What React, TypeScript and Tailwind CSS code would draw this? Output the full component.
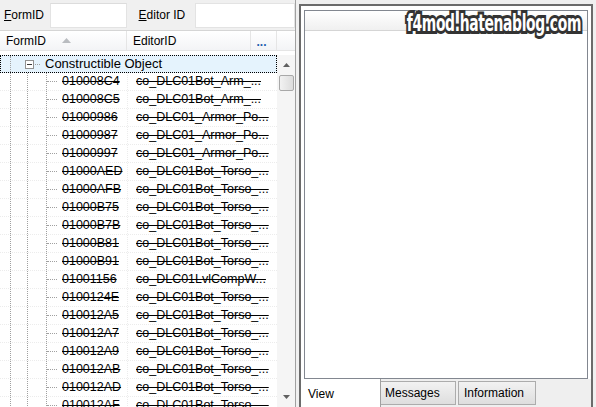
import React from "react";

type Row = {
    formId: string
    editorId: string
}

const rows: Row[] = [
    {formId: "010008C4", editorId: "co_DLC01Bot_Arm_..."},
    {formId: "010008C5", editorId: "co_DLC01Bot_Arm_..."},
    {formId: "01000986", editorId: "co_DLC01_Armor_Po..."},
    {formId: "01000987", editorId: "co_DLC01_Armor_Po..."},
    {formId: "01000997", editorId: "co_DLC01_Armor_Po..."},
    {formId: "01000AED", editorId: "co_DLC01Bot_Torso_..."},
    {formId: "01000AFB", editorId: "co_DLC01Bot_Torso_..."},
    {formId: "01000B75", editorId: "co_DLC01Bot_Torso_..."},
    {formId: "01000B7B", editorId: "co_DLC01Bot_Torso_..."},
    {formId: "01000B81", editorId: "co_DLC01Bot_Torso_..."},
    {formId: "01000B91", editorId: "co_DLC01Bot_Torso_..."},
    {formId: "01001156", editorId: "co_DLC01LvlCompW..."},
    {formId: "0100124E", editorId: "co_DLC01Bot_Torso_..."},
    {formId: "010012A5", editorId: "co_DLC01Bot_Torso_..."},
    {formId: "010012A7", editorId: "co_DLC01Bot_Torso_..."},
    {formId: "010012A9", editorId: "co_DLC01Bot_Torso_..."},
    {formId: "010012AB", editorId: "co_DLC01Bot_Torso_..."},
    {formId: "010012AD", editorId: "co_DLC01Bot_Torso_..."},
    {formId: "010012AF", editorId: "co_DLC01Bot_Torso_..."},
]

function FilterBar() {
    return (
        <div className="h-[30px] flex items-center text-[12px] text-black">
            <span className="ml-[4px] w-[46px]"><span className="underline">F</span>ormID</span>
            <div className="w-[77px] h-[25px] bg-white border border-[#e3e3e3] border-t-[#dcdcdc]"></div>
            <span className="ml-[12px] w-[57px]"><span className="underline">E</span>ditor ID</span>
            <div className="w-[100px] h-[25px] bg-white border border-[#e3e3e3]"></div>
        </div>
    )
}

function Header() {
    return (
        <div className="h-[21px] flex text-[12px] text-black bg-gradient-to-b from-white to-[#f3f4f6] border-t border-[#d5d5d5] border-b border-b-[#e5e5e5]">
            <div className="w-[127px] flex items-center pl-[6px] border-r border-[#e5e5e5]">
                FormID
                <svg width="9" height="5" viewBox="0 0 9 5" className="ml-[16px]">
                    <path d="M0 5 L4.5 0 L9 5 Z" fill="#b9bcc0"/>
                </svg>
            </div>
            <div className="w-[124px] flex items-center pl-[6px] border-r border-[#e5e5e5]">EditorID</div>
            <div className="w-[26px] flex items-end justify-center pr-[4px] pb-[2px] border-r border-[#e5e5e5] text-[#1f5fb0] font-bold leading-none">...</div>
            <div className="flex-1"></div>
        </div>
    )
}

function Indent() {
    return (
        <div className="flex h-full shrink-0">
            <div className="w-[10px] h-full"></div>
            <div className="w-[17px] h-full border-l border-dotted border-[#a0a0a0]"></div>
            <div className="w-[19px] h-full border-l border-dotted border-[#a0a0a0]"></div>
            <div className="flex flex-col w-[16px] h-full border-l border-dotted border-[#a0a0a0]">
                <div className="h-[9px] w-[10px] border-b border-dotted border-[#a0a0a0]"></div>
            </div>
        </div>
    )
}

function TreeList() {
    return (
        <div className="flex flex-1 min-h-0 pt-[4px] bg-white">
            <div className="w-[277px] flex flex-col overflow-hidden">
                <div className="h-[18px] flex items-center shrink-0 bg-[#e5f3fd] border border-dotted border-black">
                    <div className="w-[9px] h-full"></div>
                    <div className="w-[15px] h-full border-l border-dotted border-[#a0a0a0]"></div>
                    <div className="w-[9px] h-[9px] border border-[#919191] bg-white flex items-center justify-center">
                        <div className="w-[5px] h-px bg-[#3a3a3a]"></div>
                    </div>
                    <div className="w-[5px] h-px border-b border-dotted border-[#a0a0a0] ml-[1px]"></div>
                    <span className="ml-[5px] text-[13px] text-black">Constructible Object</span>
                </div>
                {rows.map(row => (
                    <div key={row.formId} className="h-[18px] flex items-center shrink-0 text-[12.5px] text-black border-b border-dotted border-[#ececec]">
                        <Indent/>
                        <div className="w-[65px] line-through decoration-black">{row.formId}</div>
                        <div className="pl-[8px] h-full flex items-center border-l border-dotted border-[#ececec] line-through decoration-black whitespace-nowrap overflow-hidden">{row.editorId}</div>
                    </div>
                ))}
            </div>
            <div className="w-[18px] bg-[#f5f5f5] flex flex-col items-center">
                <svg width="9" height="5" viewBox="0 0 9 5" className="mt-[7px]">
                    <path d="M1 5 L4.5 1 L8 5 Z" fill="#606060"/>
                </svg>
                <div className="mt-[8px] w-[15px] h-[16px] rounded-[2px] border border-[#a8a8a8] bg-gradient-to-r from-[#f2f2f2] to-[#dcdcdc]"></div>
                <div className="flex-1"></div>
                <svg width="9" height="5" viewBox="0 0 9 5" className="mb-[7px]">
                    <path d="M1 0 L4.5 4 L8 0 Z" fill="#606060"/>
                </svg>
            </div>
        </div>
    )
}

function RightPanel() {
    return (
        <div className="flex-1 flex flex-col mt-[4px] ml-[3px] mr-[3px] border-l-2 border-t-2 border-r-2 border-[#6b6b6b] bg-[#f0f0f0]">
            <div className="flex-1 flex flex-col bg-white px-[3px] pt-[4px]">
                <div className="flex-1 flex flex-col border border-[#828790] relative">
                    <div className="h-[20px] bg-gradient-to-b from-white to-[#f0f0f0] border-b border-[#d5d5d5]"></div>
                    <div className="absolute right-[6px] -top-[5px] origin-right scale-x-[0.67] whitespace-nowrap text-[23px] font-bold text-white tracking-[-0.5px] [font-family:'DejaVu_Sans_Condensed','DejaVu_Sans',sans-serif] [-webkit-text-stroke:6px_#333] [paint-order:stroke_fill]">
                        f4mod.hatenablog.com
                    </div>
                    <div className="flex-1"></div>
                </div>
            </div>
            <div className="h-[28px] flex items-end bg-[#efefef] text-[12px] text-black">
                <div className="w-[80px] h-[28px] bg-white pl-[7px] pt-[6px] border-r border-[#a0a0a0]">View</div>
                <div className="w-[75px] h-[24px] mb-[2px] pl-[4px] pt-[2px] bg-gradient-to-b from-[#f2f2f2] to-[#dedede] border border-[#acacac] border-l-0">Messages</div>
                <div className="w-[78px] h-[24px] mb-[2px] ml-[2px] pl-[5px] pt-[2px] bg-gradient-to-b from-[#f2f2f2] to-[#dedede] border border-[#acacac]">Information</div>
            </div>
        </div>
    )
}

export default function App() {
    return (
        <div className="w-[596px] h-[407px] overflow-hidden flex bg-[#f0f0f0] [font-family:'Liberation_Sans',Arial,sans-serif]">
            <div className="w-[296px] flex flex-col border-r border-[#a0a0a0]">
                <FilterBar/>
                <div className="flex-1 flex flex-col min-h-0 bg-white">
                    <Header/>
                    <TreeList/>
                </div>
            </div>
            <RightPanel/>
        </div>
    )
}
